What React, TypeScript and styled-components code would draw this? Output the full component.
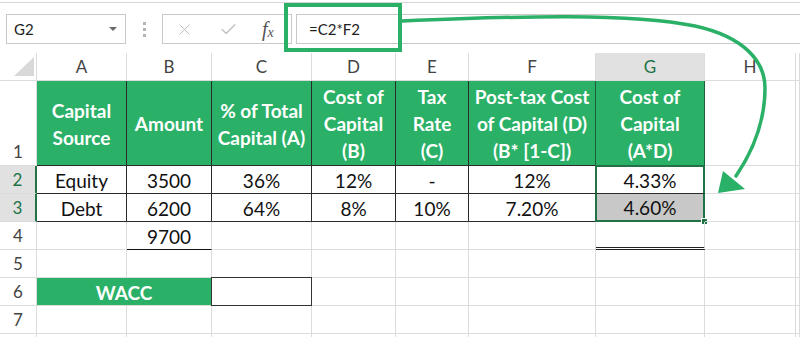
import React from 'react';
import styled, { createGlobalStyle, css } from 'styled-components';
import { X, Check } from 'lucide-react';

const GREEN = '#2ab067';
const XL_GREEN = '#217346';
const GRID = '#dcdcdc';
const RULE = '#2a2a2a';

const GlobalStyle = createGlobalStyle`
  html, body { margin: 0; padding: 0; background: #fff; }
  body { font-family: Lato, "Open Sans", "Liberation Sans", sans-serif; }
`;

const Window = styled.div`
  position: relative;
  width: 800px;
  height: 337px;
  overflow: hidden;
  background: #fff;
`;

const TopEdge = styled.div`
  height: 2px;
  border-bottom: 1px solid #d6d6d6;
  margin-bottom: 11px;
`;

const FormulaBar = styled.div`
  display: flex;
  height: 30px;
  padding-left: 6px;
  margin-bottom: 9px;
`;

const NameBox = styled.div`
  box-sizing: border-box;
  width: 120px;
  border: 1px solid #c9c9c9;
  display: flex;
  align-items: center;
  justify-content: space-between;
  padding: 0 8px 0 7px;
  font-size: 15px;
  color: #222;
`;

const Caret = styled.span`
  width: 0;
  height: 0;
  border-left: 4px solid transparent;
  border-right: 4px solid transparent;
  border-top: 4px solid #6a6a6a;
`;

const Grip = styled.div`
  width: 36px;
  display: flex;
  flex-direction: column;
  align-items: center;
  justify-content: center;
  gap: 3px;

  span {
    width: 3px;
    height: 3px;
    background: #b4b4b4;
  }
`;

const Commands = styled.div`
  box-sizing: border-box;
  width: 130px;
  border: 1px solid #c9c9c9;
  display: flex;
  align-items: center;
  padding-left: 12px;
  gap: 25px;
  color: #bdbdbd;
`;

const Fx = styled.span`
  font-family: "Liberation Serif", serif;
  font-style: italic;
  font-size: 20px;
  color: #555;
  margin-left: -1px;

  sub {
    font-size: 14px;
    vertical-align: -1px;
  }
`;

const FormulaInput = styled.div`
  flex: 1;
  margin-left: 4px;
  border: 1px solid #c9c9c9;
  border-right: none;
  display: flex;
  align-items: center;
  padding-left: 12px;
  font-size: 15px;
  color: #222;
`;

const Sheet = styled.div`
  display: grid;
  grid-template-columns: 37px 90px 85px 100px 84px 73px 127px 109px 91px 1fr;
  grid-template-rows: 28px 85px repeat(7, 28px);
`;

const headBase = css`
  box-sizing: border-box;
  display: flex;
  justify-content: center;
  color: #444;
  font-size: 17px;
  border-right: 1px solid ${GRID};
  border-bottom: 1px solid ${GRID};
`;

const ColHead = styled.div<{ $active?: boolean }>`
  ${headBase};
  align-items: center;
  ${(p) =>
    p.$active &&
    css`
      background: #e1e1e1;
      color: ${XL_GREEN};
    `}
`;

const Corner = styled.div`
  ${headBase};
  justify-content: flex-end;
  align-items: flex-end;
  padding: 0 2px 4px 0;

  &::before {
    content: '';
    border-left: 20px solid transparent;
    border-bottom: 19px solid #d9d9d9;
  }
`;

const RowHead = styled.div<{ $active?: boolean; $bottom?: boolean }>`
  ${headBase};
  align-items: ${(p) => (p.$bottom ? 'flex-end' : 'center')};
  padding-bottom: ${(p) => (p.$bottom ? '3px' : '0')};
  ${(p) =>
    p.$active &&
    css`
      background: #e1e1e1;
      color: ${XL_GREEN};
      border-right: 2px solid ${XL_GREEN};
    `}
`;

type Fill = 'green' | 'gray';
type Sel = 'top' | 'bottom';

const Cell = styled.div<{
  $fill?: Fill;
  $bold?: boolean;
  $ruled?: boolean;
  $edge?: string;
  $under?: 'single' | 'double';
  $span?: number;
  $boxed?: boolean;
  $sel?: Sel;
}>`
  position: relative;
  box-sizing: border-box;
  display: flex;
  align-items: center;
  justify-content: center;
  text-align: center;
  white-space: pre-line;
  font-size: 19px;
  line-height: 27px;
  color: #111;
  padding-top: 1px;
  border-right: 1px solid ${(p) => p.$edge ?? (p.$ruled ? RULE : GRID)};
  border-bottom: 1px solid ${(p) => (p.$ruled ? RULE : GRID)};
  ${(p) => p.$span && css`grid-column: span ${p.$span};`}
  ${(p) =>
    p.$fill === 'green' &&
    css`
      background: ${GREEN};
      color: #fff;
    `}
  ${(p) => p.$fill === 'gray' && css`background: #c8c8c8;`}
  ${(p) => p.$bold && css`font-weight: 700;`}
  ${(p) => p.$under === 'single' && css`border-bottom: 1px solid #111;`}
  ${(p) => p.$under === 'double' && css`border-bottom: 3px double #222;`}
  ${(p) =>
    p.$boxed &&
    css`
      border: 1px solid #333;
      margin: -1px 0 0 -1px;
    `}
  ${(p) =>
    p.$sel &&
    css`
      margin-left: -1px;
      border-left: 2px solid ${XL_GREEN};
      border-right: 2px solid ${XL_GREEN};
    `}
  ${(p) =>
    p.$sel === 'top' &&
    css`
      margin-top: -1px;
      border-top: 2px solid ${XL_GREEN};
    `}
  ${(p) =>
    p.$sel === 'bottom' &&
    css`
      border-bottom: 2px solid ${XL_GREEN};

      &::after {
        content: '';
        position: absolute;
        right: -5px;
        bottom: -5px;
        width: 5px;
        height: 5px;
        background: ${XL_GREEN};
        border: 1px solid #fff;
      }
    `}
`;

const Callout = styled.svg`
  position: absolute;
  inset: 0;
  pointer-events: none;
`;

const columns = ['A', 'B', 'C', 'D', 'E', 'F', 'G', 'H', ''];

const headings = [
  'Capital\nSource',
  'Amount',
  '% of Total\nCapital (A)',
  'Cost of\nCapital\n(B)',
  'Tax\nRate\n(C)',
  'Post-tax Cost\nof Capital (D)\n(B* [1-C])',
  'Cost of\nCapital\n(A*D)',
];

const rows = [
  ['Equity', '3500', '36%', '12%', '-', '12%', '4.33%'],
  ['Debt', '6200', '64%', '8%', '10%', '7.20%', '4.60%'],
];

function Blank({ n }: { n: number }) {
  return (
    <>
      {Array.from({ length: n }, (_, i) => (
        <Cell key={i} />
      ))}
    </>
  );
}

export default function App() {
  return (
    <Window>
      <GlobalStyle />
      <TopEdge />
      <FormulaBar>
        <NameBox>
          G2
          <Caret />
        </NameBox>
        <Grip>
          <span />
          <span />
          <span />
        </Grip>
        <Commands>
          <X size={19} strokeWidth={1.2} />
          <Check size={19} strokeWidth={1.5} />
          <Fx>
            f<sub>x</sub>
          </Fx>
        </Commands>
        <FormulaInput>=C2*F2</FormulaInput>
      </FormulaBar>

      <Sheet>
        <Corner />
        {columns.map((c, i) => (
          <ColHead key={i} $active={c === 'G'}>
            {c}
          </ColHead>
        ))}

        <RowHead $bottom>1</RowHead>
        {headings.map((h, i) => (
          <Cell key={i} $fill="green" $bold $ruled $edge={i === 5 || i === 6 ? '#1d5e38' : undefined}>
            {h}
          </Cell>
        ))}
        <Blank n={2} />

        {rows.map((r, ri) => (
          <React.Fragment key={ri}>
            <RowHead $active>{ri + 2}</RowHead>
            {r.map((v, ci) => (
              <Cell
                key={ci}
                $ruled
                $fill={ri === 1 && ci === 6 ? 'gray' : undefined}
                $sel={ci === 6 ? (ri === 0 ? 'top' : 'bottom') : undefined}
              >
                {v}
              </Cell>
            ))}
            <Blank n={2} />
          </React.Fragment>
        ))}

        <RowHead>4</RowHead>
        <Cell />
        <Cell $under="single">9700</Cell>
        <Blank n={4} />
        <Cell $under="double" />
        <Blank n={2} />

        <RowHead>5</RowHead>
        <Blank n={9} />

        <RowHead>6</RowHead>
        <Cell $span={2} $fill="green" $bold>
          WACC
        </Cell>
        <Cell $boxed />
        <Blank n={6} />

        <RowHead>7</RowHead>
        <Blank n={9} />

        {/* row 8 only peeks in under the bottom edge */}
        <RowHead />
        <Blank n={9} />
      </Sheet>

      <Callout width="800" height="337" viewBox="0 0 800 337">
        <rect x="286" y="5" width="114" height="45" fill="none" stroke={GREEN} strokeWidth="4" />
        <path
          d="M402 21 C 520 16, 630 13, 695 26 C 745 37, 765 62, 765 88 C 765 118, 755 148, 736 176"
          fill="none"
          stroke={GREEN}
          strokeWidth="3.5"
          strokeLinecap="round"
        />
        <polygon points="718,193 723,171 745,189" fill={GREEN} />
      </Callout>
    </Window>
  );
}
